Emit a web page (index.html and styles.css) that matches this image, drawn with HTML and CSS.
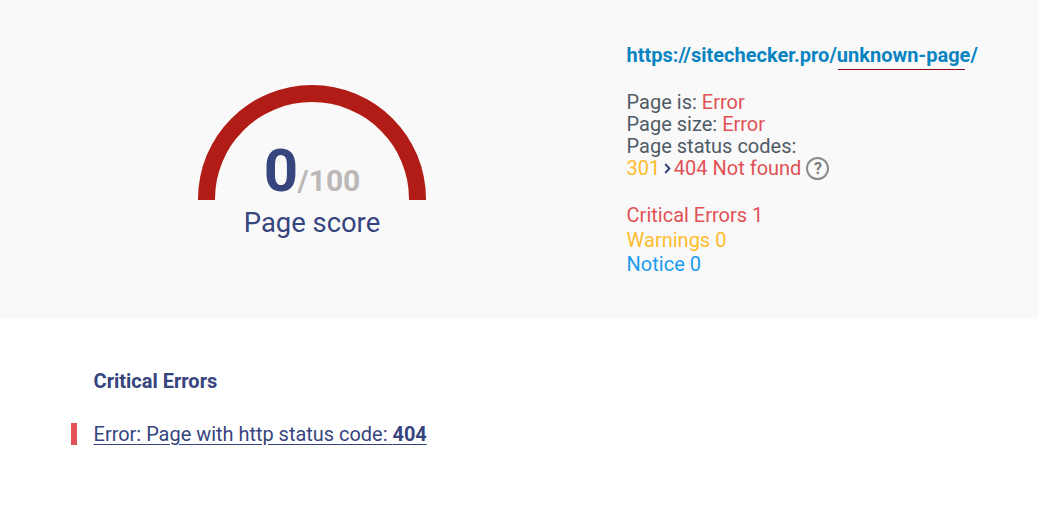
FILE: index.html
```html
<!DOCTYPE html>
<html lang="en">
<head>
<meta charset="utf-8">
<title>Page score</title>
<link rel="stylesheet" href="styles.css">
</head>
<body>
<section class="summary">
  <div class="score-col">
    <div class="gauge">
      <svg class="gauge-arc" width="228" height="115" viewBox="0 0 228 115"><path d="M0 115V114A114 114 0 0 1 228 114V115H211V114A97 97 0 0 0 17 114V115Z" fill="#b21c17"/></svg>
      <div class="gauge-value"><span class="score">0</span><span class="max">/100</span></div>
    </div>
    <div class="score-label">Page score</div>
  </div>
  <div class="info-col">
    <div class="url">https://sitechecker.pro/<span class="url-path">unknown-page</span>/</div>
    <div class="facts">
      <div>Page is: <span class="red">Error</span></div>
      <div>Page size: <span class="red">Error</span></div>
      <div>Page status codes:</div>
      <div class="codes"><span class="yellow">301</span><svg class="chevron" width="7" height="11" viewBox="0 0 7 11"><path d="M1.2 1 5.4 5.5 1.2 10" fill="none" stroke="#36457e" stroke-width="2"/></svg><span class="red">404 Not found</span><span class="help">?</span></div>
    </div>
    <div class="counts">
      <div class="red">Critical Errors 1</div>
      <div class="yellow">Warnings 0</div>
      <div class="blue">Notice 0</div>
    </div>
  </div>
</section>
<section class="issues">
  <h2 class="issues-title">Critical Errors</h2>
  <a class="issue" href="#">Error: Page with http status code: <b>404</b></a>
</section>
</body>
</html>
```
FILE: styles.css
```css
* { box-sizing: border-box; }
html, body { margin: 0; padding: 0; }
body { font-family: Roboto, "Liberation Sans", sans-serif; background: #fff; color: #36457e; }
.summary { display: flex; height: 319px; background: #f9f9f9; }
.score-col { width: 626.6px; padding: 85px 0 0 198px; }
.gauge { position: relative; width: 228px; height: 115px; }
.gauge-arc { display: block; }
.gauge-value { position: absolute; left: 0; right: 0; bottom: -18px; text-align: center; line-height: 64px; white-space: nowrap; }
.score { font-size: 60px; font-weight: 700; color: #36457e; }
.max { font-size: 30px; font-weight: 700; color: #bcb8b8; margin-left: -0.6px; }
.score-label { width: 228px; margin-top: 5px; text-align: center; font-size: 27.4px; line-height: 36px; color: #36457e; }
.info-col { padding-top: 44px; font-size: 20px; line-height: 22px; color: #4f5b66; }
.url { font-size: 20px; font-weight: 700; color: #0a84c1; white-space: nowrap; }
.url-path { position: relative; }
.url-path::after { content: ""; position: absolute; left: 1px; bottom: -3px; width: 127px; height: 1px; background: #8c0a1e; }
.facts { margin-top: 25px; }
.codes { display: flex; align-items: center; height: 22px; }
.chevron { margin: 0 2.5px 0 4px; }
.help { width: 23px; height: 23px; margin-left: 5px; border: 2px solid #8a8a8a; border-radius: 50%; font-size: 16px; font-weight: 700; line-height: 19px; text-align: center; color: #7d7d7d; }
.counts { margin-top: 25px; }
.counts div { margin-bottom: 2.5px; }
.red { color: #e05256; }
.yellow { color: #fdbd2c; }
.blue { color: #1d9bf0; }
.issues { padding: 50px 0 0 71px; }
.issues-title { margin: 0 0 0 22.6px; font-size: 20px; line-height: 24px; font-weight: 700; color: #36457e; }
.issue { display: block; margin-top: 30px; padding-left: 16.6px; border-left: 6px solid #e05256; font-size: 19.95px; line-height: 22px; color: #36457e; text-decoration: underline; text-decoration-thickness: 2px; text-underline-offset: 3px; }
```
